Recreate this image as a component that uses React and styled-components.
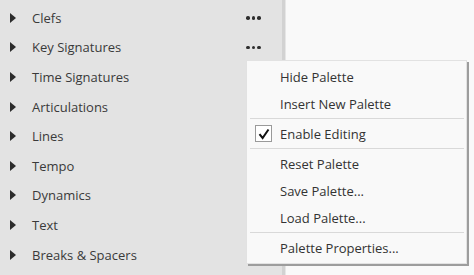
import React from "react";
import styled, { createGlobalStyle } from "styled-components";

const Global = createGlobalStyle`
  html, body {
    margin: 0;
    padding: 0;
    background: #f9f9f9;
  }
  body {
    font-family: "Open Sans", "Noto Sans", sans-serif;
    overflow: hidden;
  }
`;

const palettes = [
  { name: "Clefs", more: true },
  { name: "Key Signatures", more: true },
  { name: "Time Signatures" },
  { name: "Articulations" },
  { name: "Lines" },
  { name: "Tempo" },
  { name: "Dynamics" },
  { name: "Text" },
  { name: "Breaks & Spacers" },
];

const menu = [
  { label: "Hide Palette" },
  { label: "Insert New Palette", sep: true },
  { label: "Enable Editing", checked: true, sep: true },
  { label: "Reset Palette" },
  { label: "Save Palette..." },
  { label: "Load Palette...", sep: true },
  { label: "Palette Properties..." },
];

const App = () => {
  return (
    <Screen>
      <Global />
      <Panel>
        {palettes.map((p) => (
          <Row key={p.name}>
            <Arrow />
            <Name>{p.name}</Name>
            {p.more && (
              <More>
                <Dot />
                <Dot />
                <Dot />
              </More>
            )}
          </Row>
        ))}
      </Panel>
      <Divider />
      <Rest />
      <Menu>
        {menu.map((m) => (
          <React.Fragment key={m.label}>
            <Item>
              <CheckCell>
                {m.checked && (
                  <Box>
                    <svg width="12" height="12" viewBox="0 0 12 12">
                      <path
                        d="M1.5 6.2 L4.6 10 L10.5 1.5"
                        fill="none"
                        stroke="#111"
                        strokeWidth="2"
                      />
                    </svg>
                  </Box>
                )}
              </CheckCell>
              <Label>{m.label}</Label>
            </Item>
            {m.sep && <Sep />}
          </React.Fragment>
        ))}
      </Menu>
    </Screen>
  );
};
export default App;

const Screen = styled.div`
  position: relative;
  width: 474px;
  height: 275px;
  display: flex;
  background: #f9f9f9;
`;
const Panel = styled.div`
  width: 282px;
  height: 100%;
  background: #e3e3e3;
  padding-top: 3px;
  box-sizing: border-box;
`;
const Divider = styled.div`
  width: 3px;
  height: 100%;
  background: #d2d2d2;
  border-right: 1px solid #e6e6e6;
`;
const Rest = styled.div`
  flex: 1;
`;
const Row = styled.div`
  height: 29.6px;
  display: flex;
  align-items: center;
  padding-left: 10px;
  position: relative;
`;
const Arrow = styled.div`
  width: 0;
  height: 0;
  border-top: 5px solid transparent;
  border-bottom: 5px solid transparent;
  border-left: 6px solid #2b2b2b;
`;
const Name = styled.span`
  margin-left: 16px;
  font-size: 13px;
  color: #3a3a3a;
`;
const More = styled.div`
  position: absolute;
  left: 246px;
  display: flex;
  gap: 2px;
`;
const Dot = styled.span`
  width: 3.5px;
  height: 3.5px;
  border-radius: 50%;
  background: #2e2e2e;
`;
const Menu = styled.div`
  position: absolute;
  left: 246px;
  top: 60px;
  width: 219px;
  padding: 2px 0;
  background: #f9f9f9;
  border: 1px solid #e2e2e2;
  box-shadow: 2px 2px 0 #9d9d9d;
`;
const Item = styled.div`
  height: 27px;
  display: flex;
  align-items: center;
`;
const CheckCell = styled.div`
  width: 33px;
  display: flex;
  justify-content: center;
`;
const Box = styled.div`
  width: 15px;
  height: 15px;
  border: 1px solid #9a9a9a;
  background: #fff;
  display: flex;
  align-items: center;
  justify-content: center;
`;
const Label = styled.span`
  font-size: 13px;
  color: #333;
`;
const Sep = styled.div`
  height: 1px;
  margin: 1px 2px 1px 3px;
  background: #d9d9d9;
`;
